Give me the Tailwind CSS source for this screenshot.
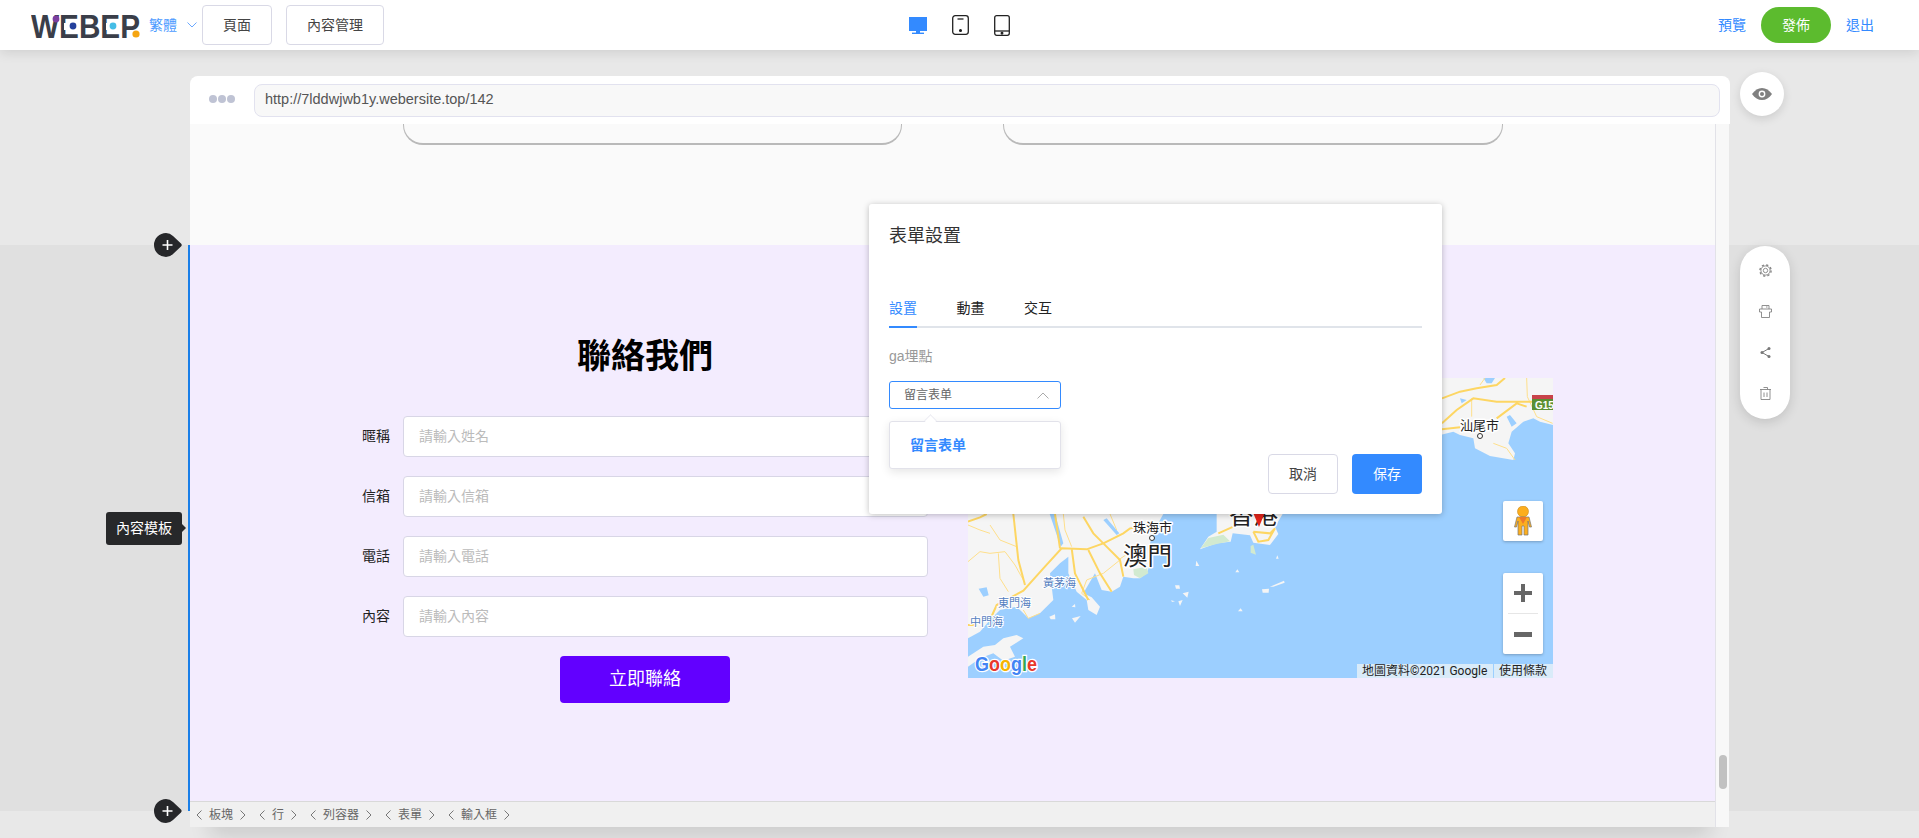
<!DOCTYPE html>
<html lang="zh-Hant">
<head>
<meta charset="utf-8">
<title>WEBEP</title>
<script src="https://cdn.jsdelivr.net/npm/@tailwindcss/browser@4"></script>
</head>
<body class="m-0 overflow-hidden">
<div class="relative w-[1919px] h-[838px] overflow-hidden bg-[#e8e8e8] text-[14px] text-[#333] [font-family:'Liberation_Sans','Noto_Sans_CJK_TC',sans-serif]">

  <!-- darker band behind the selected block -->
  <div class="absolute left-0 right-0 top-[245px] h-[566px] bg-[#e0e0e0]"></div>

  <!-- top bar -->
  <header class="relative z-20 h-[50px] bg-white shadow-[0_2px_12px_rgba(0,0,0,0.12)] grid grid-cols-[1fr_auto_1fr] items-center">
    <div class="flex items-center pl-[31px]">
      <svg width="126" height="46" viewBox="0 0 126 46" class="shrink-0">
        <g transform="translate(0 4)">
        <text x="0" y="32" textLength="109" lengthAdjust="spacingAndGlyphs" font-size="33" font-weight="700" fill="#3a3e49" font-family="Liberation Sans">WEBEP</text>
        <rect x="33" y="17" width="15" height="7" fill="#fff"/>
        <rect x="75" y="17" width="14" height="7" fill="#fff"/>
        <circle cx="25" cy="13" r="3.4" fill="#7b3fa0"/>
        <circle cx="42" cy="20" r="3.4" fill="#24409c"/>
        <circle cx="82" cy="20" r="3.4" fill="#45bde6"/>
        <rect x="99" y="24" width="11" height="9" fill="#fff"/>
        <circle cx="105" cy="28" r="3.6" fill="#f5a511"/>
        </g>
      </svg>
      <span class="-ml-[8px] text-[#4d9bff] leading-none">繁體</span>
      <svg width="10" height="6" viewBox="0 0 10 6" class="ml-[10px]" fill="none" stroke="#6aa8ff"><path d="M.5.5 5 5 9.5.5"/></svg>
      <button class="ml-[5px] w-[70px] h-[40px] border border-[#d9d9e6] rounded-[4px] bg-white text-[#444]">頁面</button>
      <button class="ml-[14px] w-[98px] h-[40px] border border-[#d9d9e6] rounded-[4px] bg-white text-[#444]">內容管理</button>
    </div>
    <div class="flex items-center gap-[25px]">
      <svg width="18" height="17" viewBox="0 0 18 17"><rect width="18" height="14" fill="#338aff"/><rect x="7" y="14" width="4" height="2" fill="#338aff"/><rect x="3" y="15.6" width="12" height="1.4" fill="#338aff"/></svg>
      <svg width="17" height="20" viewBox="0 0 17 20" fill="none" stroke="#222" stroke-width="1.3"><rect x=".7" y=".7" width="15.6" height="18.6" rx="2.5"/><path d="M5.5 4h6"/><circle cx="8.5" cy="15.5" r=".9" fill="#222"/></svg>
      <svg width="16" height="21" viewBox="0 0 16 21" fill="none" stroke="#222" stroke-width="1.3"><rect x=".7" y=".7" width="14.6" height="19.6" rx="2"/><path d="M.7 16h14.6"/><circle cx="8" cy="18.2" r=".8" fill="#222"/></svg>
    </div>
    <div class="flex items-center justify-end pr-[45px]">
      <a class="text-[#338aff]">預覽</a>
      <button class="ml-[15px] w-[70px] h-[36px] rounded-full bg-[#5cbb2e] text-white">發佈</button>
      <a class="ml-[15px] text-[#338aff]">退出</a>
    </div>
  </header>

  <!-- browser frame -->
  <div class="relative z-10 ml-[190px] mt-[26px] w-[1540px] h-[751px] flex flex-col shadow-[0_30px_20px_-20px_rgba(0,0,0,0.12)]">
    <div class="h-[48px] shrink-0 bg-white rounded-t-[8px] flex items-center pl-[19px] pr-[10px]">
      <div class="flex gap-[1px] w-[45px] shrink-0 -mt-[2px]">
        <i class="w-[8px] h-[8px] rounded-full bg-[#bfc3d4]"></i>
        <i class="w-[8px] h-[8px] rounded-full bg-[#bfc3d4]"></i>
        <i class="w-[8px] h-[8px] rounded-full bg-[#bfc3d4]"></i>
      </div>
      <div class="flex-1 h-[33px] rounded-[8px] border border-[#e2e2ef] bg-[#f8f8f8] flex items-center pl-[10px] text-[14.5px] text-[#555]">http://7lddwjwb1y.webersite.top/142</div>
    </div>

    <div class="flex flex-1 w-[1539px] min-h-0">
      <div class="relative w-[1525px] flex flex-col">
        <!-- previous block -->
        <section class="h-[121px] shrink-0 bg-[#fafafa] flex pl-[213px] gap-[101px]">
          <div class="w-[499px] h-[21px] rounded-b-[20px] border-x border-b-2 border-[#b9b9b9]"></div>
          <div class="w-[500px] h-[21px] rounded-b-[20px] border-x border-b-2 border-[#b9b9b9]"></div>
        </section>

        <!-- contact block -->
        <section class="flex-1 bg-[#f3ecfe] flex items-start pl-[155px]">
          <div class="w-[600px] flex flex-col">
            <h2 class="mt-[87px] h-[48px] leading-[48px] text-center text-[34px] font-bold text-black">聯絡我們</h2>
            <div class="mt-[36px] flex flex-col gap-[19px]">
              <div class="flex items-center gap-[13px]"><label class="w-[45px] text-right text-[#222]">暱稱</label><div class="w-[525px] h-[41px] rounded-[4px] bg-white border border-[#d8d6e6] flex items-center pl-[15px] text-[#bbb]">請輸入姓名</div></div>
              <div class="flex items-center gap-[13px]"><label class="w-[45px] text-right text-[#222]">信箱</label><div class="w-[525px] h-[41px] rounded-[4px] bg-white border border-[#d8d6e6] flex items-center pl-[15px] text-[#bbb]">請輸入信箱</div></div>
              <div class="flex items-center gap-[13px]"><label class="w-[45px] text-right text-[#222]">電話</label><div class="w-[525px] h-[41px] rounded-[4px] bg-white border border-[#d8d6e6] flex items-center pl-[15px] text-[#bbb]">請輸入電話</div></div>
              <div class="flex items-center gap-[13px]"><label class="w-[45px] text-right text-[#222]">內容</label><div class="w-[525px] h-[41px] rounded-[4px] bg-white border border-[#d8d6e6] flex items-center pl-[15px] text-[#bbb]">請輸入內容</div></div>
            </div>
            <button class="mx-auto mt-[19px] w-[170px] h-[47px] rounded-[4px] bg-[#6200ff] text-white text-[18px]">立即聯絡</button>
          </div>

          <!-- map -->
          <div class="relative ml-[23px] mt-[133px] w-[585px] h-[300px] overflow-hidden bg-[#9ccfff]">
            <svg width="585" height="300" viewBox="968 378 585 300" class="block">
              <rect x="968" y="378" width="585" height="300" fill="#9ccfff"/>
              <g transform="translate(960 510) scale(.33333)">
                <path fill="#f5f5f5" d="M0 -400H620L610 12 600 30 585 60 570 100 575 150 560 190 540 205 520 205 490 200 480 230 455 245 425 240 405 190 370 250 395 262 420 290 410 315 385 300 380 270 350 245 325 190 325 140 300 160 270 190 280 270 240 310 205 325 190 310 170 290 120 300 90 330 60 365 24 385 0 390Z"/>
                <path fill="#f5f5f5" d="M24 440 70 410 105 405 130 385 170 375 190 385 150 410 165 440 130 452 100 430 60 445 24 470Z"/>
                <path fill="#f5f5f5" d="M268 320 285 313 286 328 272 328ZM336 325 362 318 345 338ZM335 290 345 282 346 292ZM645 226 658 226 660 236 648 236ZM668 250 686 245 682 263ZM655 274 668 270 660 288ZM633 271 645 274 636 276ZM707 168 709 152 718 168ZM826 187 832 178 838 187ZM834 304 842 295 848 304ZM906 238 927 236 926 248 908 248ZM930 230 972 212 974 218 940 230ZM948 146 952 136 956 146Z"/>
                <path fill="#f5f5f5" d="M770 0V65L745 80 720 118 770 100 812 95 818 70 870 76 880 98 930 105 955 72 945 50 975 0Z"/>
                <path fill="#d2ead0" d="M722 115 745 84 790 74 810 94 770 102ZM520 178 560 170 565 190 540 205 522 195ZM872 108 880 104 888 134 872 128Z"/>
                <path fill="#9ccfff" d="M56 236 80 232 86 256 70 260ZM265 0 282 0 310 100 302 110ZM430 30 440 25 478 70 470 75Z"/>
                <g fill="none" stroke="#fedf8b" stroke-width="3">
                  <path d="M24 155 60 125 90 130 135 125 165 165 190 210M90 45 120 90 170 110M24 45 60 60 90 70M115 130 120 205 145 245M310 12 315 60 335 110M190 300 205 325 240 310M480 150 430 190 380 210 365 250 390 270M450 12 470 60M520 120 475 150"/>
                </g>
                <g fill="none" stroke="#fdd663" stroke-width="6">
                  <path d="M24 35 60 22 80 12M160 12 175 150 195 225M90 330 110 285 190 242 250 175 305 115 380 118 430 100 490 70 510 55 580 45M335 115 345 190 385 270M370 20 400 70 430 100 480 150 490 200M385 120 420 190 455 245M300 115 285 12M24 345H50M775 70 820 50 870 30M880 65 930 70 945 55 925 90 895 95 880 65"/>
                </g>
              </g>
              <g transform="translate(1440 370) scale(.33333)">
                <path fill="#f5f5f5" d="M0 24H339V165L300 155 280 145 250 155 215 185 205 220 225 250 220 270 150 258 105 235 100 205 60 195 40 185 0 195Z"/>
                <path fill="#9ccfff" d="M130 24 165 24 155 40 140 40ZM200 140 215 170 230 160 210 135ZM60 85 80 90 65 100ZM220 220 240 218 232 240Z"/>
                <g fill="none" stroke="#fedf8b" stroke-width="3"><path d="M160 220 200 235 225 270M95 85 95 140M260 24 262 80 290 140 338 160M120 45 135 24"/></g>
                <g fill="none" stroke="#fdd663" stroke-width="6"><path d="M6 85 60 65 110 55 170 45 195 24M6 160 50 120 100 85 170 95 230 95 276 95M170 145 230 100 260 110M6 178 60 172"/></g>
              </g>
              <g stroke="#fff" stroke-width="3" stroke-linejoin="round" fill="#222" font-family="Noto Sans CJK TC">
                <text x="1133" y="532" font-size="13" paint-order="stroke">珠海市</text>
                <text x="1460" y="430" font-size="13" paint-order="stroke">汕尾市</text>
                <text x="1123" y="565" font-size="24.5" paint-order="stroke">澳門</text>
                <text x="1229" y="524" font-size="24.5" paint-order="stroke">香港</text>
              </g>
              <g stroke="#fff" stroke-width="2" fill="#5580c0" font-family="Noto Sans CJK TC" font-size="11">
                <text x="1043" y="587" paint-order="stroke">黃茅海</text>
                <text x="998" y="607" paint-order="stroke">東門海</text>
                <text x="970" y="626" paint-order="stroke">中門海</text>
              </g>
              <path d="M1250 505H1268L1259 527Z" fill="#e2231a"/>
              <circle cx="1152" cy="538" r="2.5" fill="#fff" stroke="#333" stroke-width="1"/>
              <circle cx="1480" cy="436" r="2.5" fill="#fff" stroke="#333" stroke-width="1"/>
              <rect x="1532" y="395" width="21" height="4" fill="#c8434a"/>
              <rect x="1532" y="399" width="21" height="11" fill="#5a8f32"/>
              <text x="1535" y="408.5" font-size="10" font-weight="700" fill="#fff" font-family="Liberation Sans">G15</text>
              <text x="975" y="671" font-size="20" font-weight="700" textLength="62" lengthAdjust="spacingAndGlyphs" stroke="#fff" stroke-width="2.5" paint-order="stroke" font-family="Liberation Sans"><tspan fill="#4285f4">G</tspan><tspan fill="#e8382c">o</tspan><tspan fill="#f4b400">o</tspan><tspan fill="#4285f4">g</tspan><tspan fill="#34a853">l</tspan><tspan fill="#e8382c">e</tspan></text>
            </svg>
            <div class="absolute left-[535px] top-[123px] w-[40px] h-[40px] bg-white rounded-[2px] shadow-[0_1px_3px_rgba(0,0,0,0.25)] flex items-center justify-center">
              <svg width="18" height="30" viewBox="0 0 18 30"><circle cx="9" cy="5.500" r="5.500" fill="#fcae1e" stroke="#c98a1c" stroke-width=".6"/><path d="M3 11H15L17.5 21H15.5L14 15V29H10V20H8V29H4V15L2.5 21H.5Z" fill="#fcae1e" stroke="#777" stroke-width=".7"/><path d="M5 11H13L9 18Z" fill="#ee7a2c"/></svg>
            </div>
            <div class="absolute left-[535px] top-[195px] w-[40px] h-[81px] bg-white rounded-[2px] shadow-[0_1px_3px_rgba(0,0,0,0.25)] flex flex-col items-center">
              <div class="h-[40px] flex items-center"><svg width="18" height="18" viewBox="0 0 18 18"><path d="M7 0h4v7h7v4h-7v7H7v-7H0V7h7z" fill="#666"/></svg></div>
              <div class="w-[30px] h-px bg-[#e6e6e6]"></div>
              <div class="h-[40px] flex items-center"><div class="w-[18px] h-[5px] bg-[#666]"></div></div>
            </div>
            <div class="absolute right-0 bottom-0 h-[14px] flex gap-px text-[12px] leading-[14px] text-[#222] [font-family:Roboto,'Noto_Sans_CJK_TC',sans-serif]">
              <span class="w-[136px] pl-[5px] bg-[#d9ebf9] whitespace-nowrap">地圖資料©2021 Google</span>
              <span class="w-[59px] pl-[5px] bg-[#d9ebf9] whitespace-nowrap">使用條款</span>
            </div>
          </div>
        </section>

        <!-- breadcrumb -->
        <nav class="h-[26px] shrink-0 bg-[#f0f0f0] border-t border-[#d9d9d9] flex items-center pl-[6px] gap-[13px] text-[12px] text-[#666]">
          <span class="flex items-center gap-[7px]"><svg width="6" height="10" viewBox="0 0 6 10" fill="none" stroke="#777"><path d="M5.5.5 1 5l4.5 4.5"/></svg>板塊<svg width="6" height="10" viewBox="0 0 6 10" fill="none" stroke="#777"><path d="M.5.5 5 5 .5 9.5"/></svg></span>
          <span class="flex items-center gap-[7px]"><svg width="6" height="10" viewBox="0 0 6 10" fill="none" stroke="#777"><path d="M5.5.5 1 5l4.5 4.5"/></svg>行<svg width="6" height="10" viewBox="0 0 6 10" fill="none" stroke="#777"><path d="M.5.5 5 5 .5 9.5"/></svg></span>
          <span class="flex items-center gap-[7px]"><svg width="6" height="10" viewBox="0 0 6 10" fill="none" stroke="#777"><path d="M5.5.5 1 5l4.5 4.5"/></svg>列容器<svg width="6" height="10" viewBox="0 0 6 10" fill="none" stroke="#777"><path d="M.5.5 5 5 .5 9.5"/></svg></span>
          <span class="flex items-center gap-[7px]"><svg width="6" height="10" viewBox="0 0 6 10" fill="none" stroke="#777"><path d="M5.5.5 1 5l4.5 4.5"/></svg>表單<svg width="6" height="10" viewBox="0 0 6 10" fill="none" stroke="#777"><path d="M.5.5 5 5 .5 9.5"/></svg></span>
          <span class="flex items-center gap-[7px]"><svg width="6" height="10" viewBox="0 0 6 10" fill="none" stroke="#777"><path d="M5.5.5 1 5l4.5 4.5"/></svg>輸入框<svg width="6" height="10" viewBox="0 0 6 10" fill="none" stroke="#777"><path d="M.5.5 5 5 .5 9.5"/></svg></span>
        </nav>

        <!-- form settings dialog -->
        <div class="absolute left-[679px] top-[80px] w-[573px] h-[310px] z-10 bg-white rounded-[3px] shadow-[0_1px_6px_rgba(0,0,0,0.25)] px-[20px] pt-[18px] flex flex-col">
          <h3 class="h-[28px] leading-[28px] text-[18px] font-normal text-[#333]">表單設置</h3>
          <div class="mt-[47px] flex gap-[39.5px] border-b-2 border-[#e0e4ea] h-[31px] text-[#222]">
            <span class="relative h-[31px] leading-[22px] text-[#338aff] after:absolute after:left-0 after:right-0 after:bottom-0 after:h-[2px] after:bg-[#338aff]">設置</span>
            <span class="leading-[22px]">動畫</span>
            <span class="leading-[22px]">交互</span>
          </div>
          <div class="mt-[18px] h-[20px] leading-[20px] text-[#999]">ga埋點</div>
          <div class="relative mt-[15px] w-[172px] h-[28px] rounded-[3px] border border-[#338aff] flex items-center justify-between pl-[14px] pr-[11px] text-[12px] text-[#666]">
            留言表单
            <svg width="12" height="7" viewBox="0 0 12 7" fill="none" stroke="#aaa"><path d="M.5 6.5 6 1l5.5 5.5"/></svg>
            <div class="absolute -left-px top-[39px] w-[172px] h-[48px] z-10 bg-white rounded-[3px] border border-[#e2e2ea] shadow-[0_3px_10px_rgba(0,0,0,0.1)] flex items-center pl-[20px] text-[14px] font-semibold text-[#338aff]">留言表单</div>
            <div class="absolute left-[36px] top-[34px] w-[9px] h-[9px] z-20 rotate-45 bg-white border-l border-t border-[#ececf2]"></div>
          </div>
          <div class="mt-[45px] flex justify-end gap-[14px]">
            <button class="w-[70px] h-[40px] rounded-[4px] border border-[#d9d9e6] bg-white text-[#444]">取消</button>
            <button class="w-[70px] h-[40px] rounded-[4px] bg-[#338aff] text-white">保存</button>
          </div>
        </div>
      </div>

      <!-- scrollbar -->
      <div class="w-[14px] shrink-0 bg-[#f8f8f8] border-l border-[#e2e2e8] relative">
        <div class="absolute left-[3px] top-[631px] w-[8px] h-[34px] rounded-full bg-[#c1c1c1]"></div>
      </div>
    </div>
  </div>

  <!-- block edge marker -->
  <div class="absolute z-10 left-[188px] top-[245px] w-[2px] h-[566px] bg-[#1a7fe8]"></div>

  <!-- add-block handles -->
  <svg class="absolute z-20 left-[154px] top-[233px]" width="30" height="24" viewBox="0 0 30 24"><path d="M12 0A12 12 0 1 0 12 24Q16 24 19 21L27 13.5Q28.5 12 27 10.5L19 3Q16 0 12 0Z" fill="#26272a"/><path d="M13.5 7v10M8.5 12h10" stroke="#fff" stroke-width="1.6"/></svg>
  <svg class="absolute z-20 left-[154px] top-[799px]" width="30" height="24" viewBox="0 0 30 24"><path d="M12 0A12 12 0 1 0 12 24Q16 24 19 21L27 13.5Q28.5 12 27 10.5L19 3Q16 0 12 0Z" fill="#26272a"/><path d="M13.5 7v10M8.5 12h10" stroke="#fff" stroke-width="1.6"/></svg>

  <!-- tooltip -->
  <div class="absolute z-20 left-[106px] top-[512px] w-[76px] h-[33px] rounded-[3px] bg-[#27282a] text-white flex items-center justify-center after:absolute after:left-full after:top-[12px] after:border-y-[4px] after:border-l-[4px] after:border-y-transparent after:border-l-[#27282a]">內容模板</div>

  <!-- floating tools -->
  <div class="absolute z-20 left-[1740px] top-[72px] w-[44px] h-[44px] rounded-full bg-white shadow-[0_3px_10px_rgba(0,0,0,0.12)] flex items-center justify-center">
    <svg width="20" height="12" viewBox="0 0 20 12"><path d="M0 6C3 2 6 0 10 0s7 2 10 6c-3 4-6 6-10 6S3 10 0 6Z" fill="#808080"/><circle cx="10" cy="6" r="3.4" fill="#fff"/><circle cx="10" cy="6" r="2" fill="#808080"/></svg>
  </div>
  <div class="absolute z-20 left-[1740px] top-[246px] w-[50px] h-[173px] rounded-full bg-white shadow-[0_3px_12px_rgba(0,0,0,0.14)] flex flex-col items-center pt-[18px] gap-[28px]">
    <svg width="13" height="13" viewBox="0 0 13 13" fill="none" stroke="#858585"><circle cx="6.5" cy="6.500" r="4.600" stroke-width=".9"/><circle cx="6.500" cy="6.500" r="5.600" stroke-width="1.400" stroke-dasharray="2.200 2.200"/><circle cx="6.500" cy="6.500" r="2.200" stroke-width=".9"/></svg>
    <svg width="13" height="13" viewBox="0 0 13 13" fill="none" stroke="#858585" stroke-width=".9"><path d="M3 4V.5h7V4M.5 4h12v3h-2v5.500h-8V7h-2zM7 2h1.500"/></svg>
    <svg width="13" height="13" viewBox="0 0 13 13" fill="#777" stroke="#777"><path d="M10 2.500 3 6.500l7 4" fill="none"/><circle cx="10" cy="2.500" r="1.500" stroke="none"/><circle cx="3" cy="6.500" r="1.500" stroke="none"/><circle cx="10" cy="10.500" r="1.500" stroke="none"/></svg>
    <svg width="13" height="13" viewBox="0 0 13 13" fill="none" stroke="#858585" stroke-width=".9"><path d="M1 2.500h11M2 2.500v10h9v-10M4.500.5h4v2M5 5.500v4.500M8 5.500v4.500"/></svg>
  </div>
</div>
</body>
</html>
